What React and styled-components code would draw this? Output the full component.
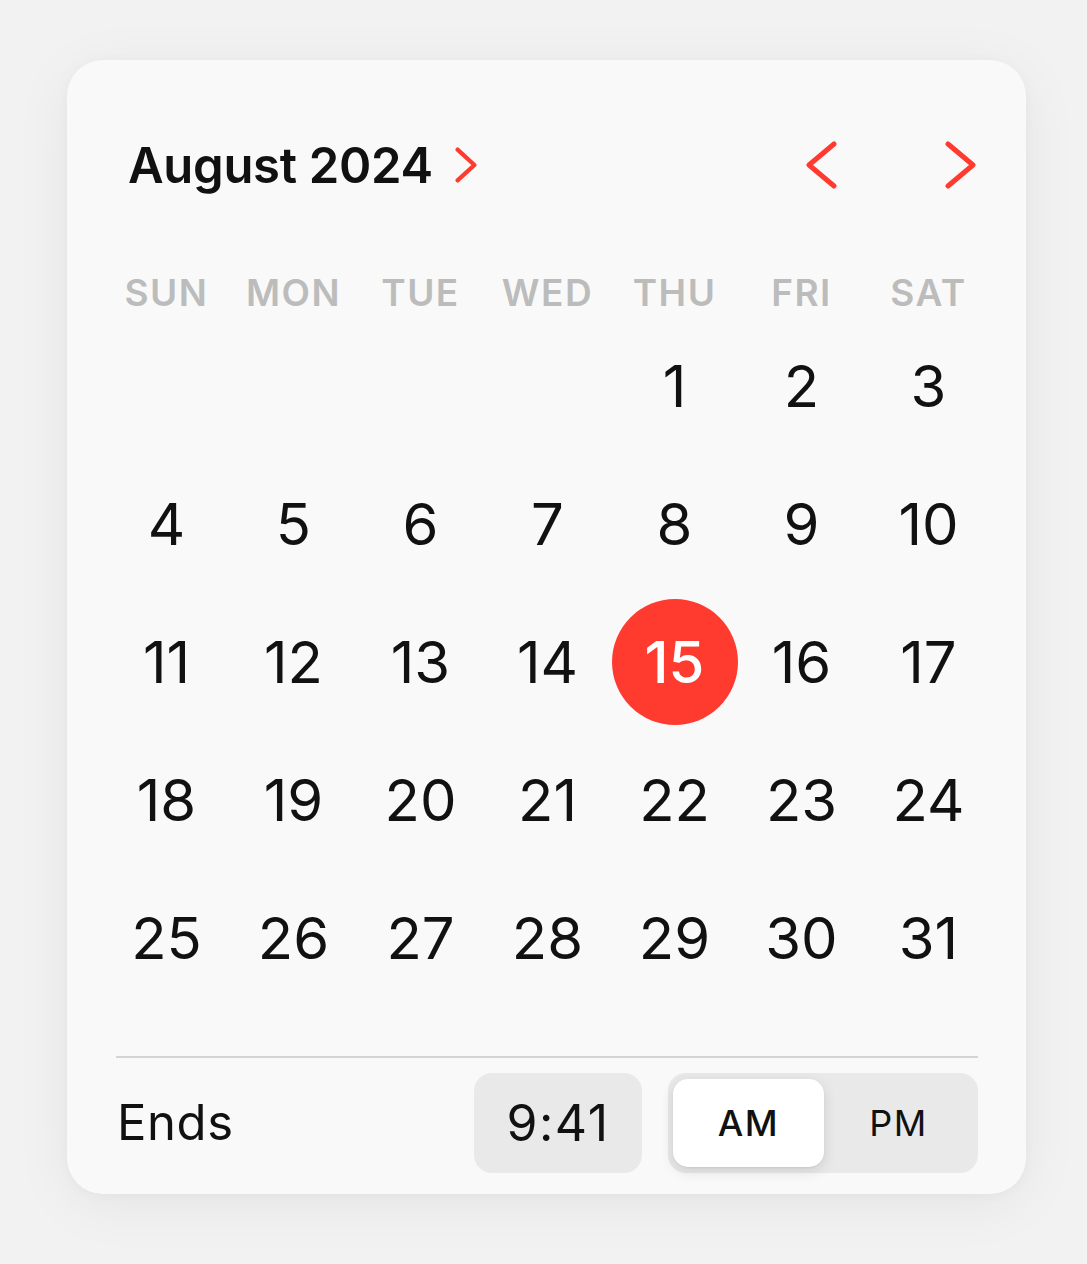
import React from "react";
import styled, { createGlobalStyle } from "styled-components";

const Global = createGlobalStyle`
  html, body {
    margin: 0;
    padding: 0;
    background: #f2f2f2;
    font-family: Inter, "Noto Sans", "Liberation Sans", sans-serif;
    -webkit-font-smoothing: antialiased;
  }
`;

const Page = styled.div`
  padding: 60px 0 0 67px;
  min-height: 1264px;
  box-sizing: border-box;
`;

const Card = styled.div`
  width: 959px;
  height: 1134px;
  box-sizing: border-box;
  background: #f9f9f9;
  border-radius: 36px;
  box-shadow: 0 10px 60px rgba(0, 0, 0, 0.06), 0 2px 12px rgba(0, 0, 0, 0.03);
  padding-top: 70px;
  display: flex;
  flex-direction: column;
`;

const Header = styled.div`
  height: 70px;
  display: flex;
  align-items: center;
  padding: 0 50px 0 61px;
`;

const Title = styled.div`
  display: flex;
  align-items: center;
  gap: 22px;
  font-size: 49px;
  font-weight: 600;
  color: #111;
  letter-spacing: -0.3px;
`;

const NavGroup = styled.div`
  margin-left: auto;
  display: flex;
  align-items: center;
  gap: 108px;
`;

const NavButton = styled.button`
  border: 0;
  background: none;
  padding: 0;
  display: flex;
  cursor: pointer;
`;

const Weekdays = styled.div`
  margin: 67px 34px 0 36px;
  height: 50px;
  display: grid;
  grid-template-columns: repeat(7, 127px);
  align-items: center;
`;

const Weekday = styled.div`
  text-align: center;
  font-size: 37px;
  font-weight: 600;
  color: #bcbcbc;
  letter-spacing: 1.5px;
`;

const Days = styled.div`
  margin: 0 34px 0 36px;
  display: grid;
  grid-template-columns: repeat(7, 127px);
  grid-auto-rows: 138px;
`;

const Day = styled.div`
  display: flex;
  align-items: center;
  justify-content: center;
`;

const DayNumber = styled.div`
  width: 126px;
  height: 126px;
  border-radius: 50%;
  display: flex;
  align-items: center;
  justify-content: center;
  font-size: 58px;
  font-weight: ${(p) => (p.$selected ? 500 : 400)};
  color: ${(p) => (p.$selected ? "#fff" : "#111")};
  background: ${(p) => (p.$selected ? "#ff3b30" : "transparent")};
  letter-spacing: 0;
`;

const Divider = styled.div`
  margin: 49px 48px 0 49px;
  height: 1.5px;
  background: #d4d4d4;
`;

const Footer = styled.div`
  display: flex;
  align-items: center;
  padding: 15px 48px 0 50px;
`;

const Label = styled.div`
  font-size: 49px;
  color: #111;
  letter-spacing: 0.6px;
`;

const TimeBox = styled.div`
  margin-left: auto;
  width: 168px;
  height: 100px;
  border-radius: 18px;
  background: #e9e9e9;
  display: flex;
  align-items: center;
  justify-content: center;
  font-size: 50px;
  color: #111;
  letter-spacing: 1.5px;
`;

const Segmented = styled.div`
  margin-left: 26px;
  width: 310px;
  height: 100px;
  box-sizing: border-box;
  padding: 6px 5px;
  border-radius: 18px;
  background: #e9e9e9;
  display: flex;
`;

const Segment = styled.div`
  flex: ${(p) => (p.$active ? "0 0 151px" : "1")};
  display: flex;
  align-items: center;
  justify-content: center;
  border-radius: 15px;
  background: ${(p) => (p.$active ? "#fff" : "transparent")};
  box-shadow: ${(p) =>
    p.$active ? "0 4px 14px rgba(0,0,0,0.12), 0 1px 2px rgba(0,0,0,0.05)" : "none"};
  font-size: 36px;
  font-weight: ${(p) => (p.$active ? 500 : 400)};
  color: #111;
  letter-spacing: 1.5px;
`;

const Chevron = ({ dir = "right", w, h, stroke }) => {
  const pad = stroke / 2 + 0.5;
  const points =
    dir === "right"
      ? `${pad},${pad} ${w - pad},${h / 2} ${pad},${h - pad}`
      : `${w - pad},${pad} ${pad},${h / 2} ${w - pad},${h - pad}`;
  return (
    <svg width={w} height={h} viewBox={`0 0 ${w} ${h}`} fill="none">
      <polyline
        points={points}
        stroke="#ff3b30"
        strokeWidth={stroke}
        strokeLinecap="round"
        strokeLinejoin="round"
      />
    </svg>
  );
};

const weekdays = ["SUN", "MON", "TUE", "WED", "THU", "FRI", "SAT"];
const firstWeekday = 4; // August 1, 2024 is a Thursday
const daysInMonth = 31;
const selectedDay = 15;

export default function App() {
  const cells = [];
  for (let i = 0; i < firstWeekday; i++) cells.push(null);
  for (let d = 1; d <= daysInMonth; d++) cells.push(d);

  return (
    <>
      <Global />
      <Page>
        <Card>
          <Header>
            <Title>
              August 2024
              <Chevron dir="right" w={22} h={36} stroke={4.2} />
            </Title>
            <NavGroup>
              <NavButton aria-label="Previous month">
                <Chevron dir="left" w={31} h={48} stroke={5} />
              </NavButton>
              <NavButton aria-label="Next month">
                <Chevron dir="right" w={31} h={48} stroke={5} />
              </NavButton>
            </NavGroup>
          </Header>

          <Weekdays>
            {weekdays.map((w) => (
              <Weekday key={w}>{w}</Weekday>
            ))}
          </Weekdays>

          <Days>
            {cells.map((d, i) => (
              <Day key={i}>
                {d && <DayNumber $selected={d === selectedDay}>{d}</DayNumber>}
              </Day>
            ))}
          </Days>

          <Divider />

          <Footer>
            <Label>Ends</Label>
            <TimeBox>9:41</TimeBox>
            <Segmented>
              <Segment $active>AM</Segment>
              <Segment>PM</Segment>
            </Segmented>
          </Footer>
        </Card>
      </Page>
    </>
  );
}
